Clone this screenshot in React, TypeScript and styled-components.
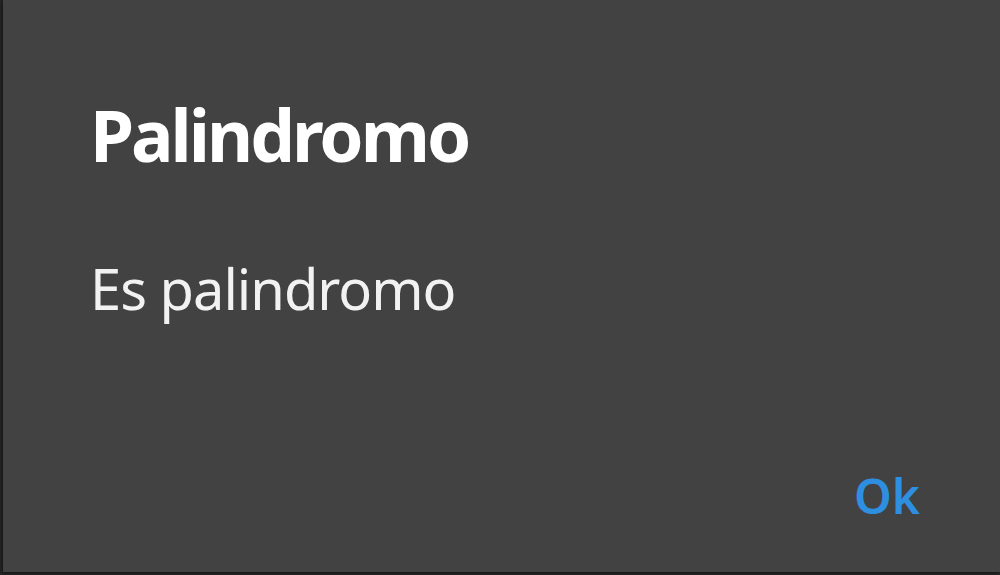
import styled, { createGlobalStyle } from "styled-components";
import { FC } from "react";

const App: FC = () => {
  return (
    <>
      <GlobalStyle />
      <Backdrop>
        <Dialog>
          <Title>Palindromo</Title>
          <Message>Es palindromo</Message>
          <Actions>
            <ActionButton>Ok</ActionButton>
          </Actions>
        </Dialog>
      </Backdrop>
    </>
  );
};

const GlobalStyle = createGlobalStyle`
  html, body {
    margin: 0;
    padding: 0;
    background: #232323;
  }
`;

const Backdrop = styled.div`
  width: 1000px;
  height: 575px;
  display: flex;
  padding: 0 0 3px 3px;
  box-sizing: border-box;
  background: #262626;
`;

const Dialog = styled.div`
  flex: 1;
  display: flex;
  flex-direction: column;
  background: #424242;
  box-shadow: -1px 1px 3px rgba(0, 0, 0, 0.5);
  padding: 85px 80px 46px 87px;
  font-family: "Noto Sans", "Open Sans", sans-serif;
  color: #ffffff;
`;

const Title = styled.h2`
  margin: 0;
  font-size: 71px;
  font-weight: 700;
  line-height: 100px;
  letter-spacing: -3px;
`;

const Message = styled.p`
  margin: 67px 0 0;
  font-size: 56px;
  font-weight: 400;
  line-height: 72px;
  letter-spacing: -1px;
  color: #f2f2f2;
`;

const Actions = styled.div`
  margin-top: auto;
  display: flex;
  justify-content: flex-end;
`;

const ActionButton = styled.button`
  border: none;
  background: none;
  padding: 0;
  font-family: inherit;
  font-size: 48px;
  font-weight: 600;
  line-height: 60px;
  color: #2e8fe0;
  cursor: pointer;
`;

export default App;
